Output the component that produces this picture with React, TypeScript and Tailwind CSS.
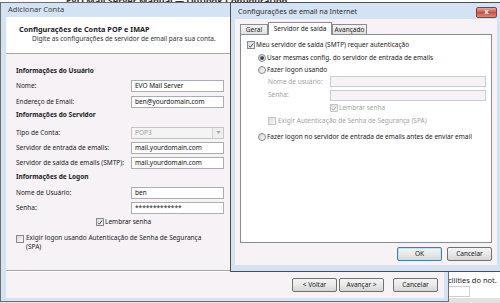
import React from "react";

type CheckProps = { checked?: boolean; disabled?: boolean };

const Check = ({ checked = false, disabled = false }: CheckProps) => (
  <span
    className={`inline-flex h-[8px] w-[8px] shrink-0 items-center justify-center border bg-linear-to-br from-[#d5d9df] to-[#fbfbfb] ${
      disabled ? "border-[#c6c6c6]" : "border-[#8a8a8a]"
    }`}
  >
    {checked && (
      <svg viewBox="0 0 8 8" className="h-[7px] w-[7px]">
        <path
          d="M1.4 4.3 L3.2 6.3 L6.8 1.3"
          fill="none"
          stroke={disabled ? "#a9a9a9" : "#2c3f66"}
          strokeWidth="1.3"
        />
      </svg>
    )}
  </span>
);

const Radio = ({ checked = false }: { checked?: boolean }) => (
  <span className="inline-flex h-[8px] w-[8px] shrink-0 items-center justify-center rounded-full border border-[#8a8a8a] bg-linear-to-br from-[#cfd3d9] to-[#fbfbfb]">
    {checked && <span className="h-[4px] w-[4px] rounded-full bg-linear-to-br from-[#60759a] to-[#18263f]" />}
  </span>
);

const Field = ({ value = "", className = "" }: { value?: string; className?: string }) => (
  <div
    className={`flex h-[12px] items-center whitespace-nowrap border border-[#abadb3] bg-white pl-[3px] text-[6.5px] text-[#111] ${className}`}
  >
    {value}
  </div>
);

const Btn = ({ label, focused = false }: { label: string; focused?: boolean }) => (
  <div
    className={`flex h-[14px] w-[45px] items-center justify-center rounded-[2px] border bg-linear-to-b from-[#f4f4f4] via-[#e9e9e9] to-[#d5d5d5] text-[6.5px] text-[#222] ${
      focused ? "border-[#3c7fb1] shadow-[inset_0_0_0_1px_#bfe3f8]" : "border-[#707070]"
    }`}
  >
    {label}
  </div>
);

const Row = ({ label, children, h }: { label: string; children: React.ReactNode; h: string }) => (
  <div className={`flex items-center ${h}`}>
    <span className="w-[115px] whitespace-nowrap text-[6.5px]">{label}</span>
    {children}
  </div>
);

const LeftDialog = () => (
  <div className="absolute left-0 top-[2px] flex h-[300px] w-[449px] flex-col border border-[#6f6f6f] bg-[#d4e3f3] pb-[3px] pl-[5px] pr-[4px]">
    <div className="flex h-[14px] items-center pl-[2px] text-[7.5px] text-[#3d3d3d]">Adicionar Conta</div>

    <div className="flex flex-1 flex-col bg-[#f6f2f6]">
      {/* Header */}
      <div className="h-[37px] border-b border-[#a7a7a7] bg-white pl-[13px] pt-[7px]">
        <div className="text-[7.3px] font-bold leading-[10px]">Configurações de Conta POP e IMAP</div>
        <div className="pl-[13px] text-[6.5px] leading-[10px] text-[#333]">
          Digite as configurações de servidor de email para sua conta.
        </div>
      </div>

      {/* Body */}
      <div className="flex-1 pl-[10px] pt-[10px]">
        <div className="flex h-[14px] items-center text-[6.5px] font-bold">Informações do Usuário</div>
        <Row label="Nome:" h="h-[16px]">
          <Field value="EVO Mail Server" className="w-[93px]" />
        </Row>
        <Row label="Endereço de Email:" h="h-[15px]">
          <Field value="ben@yourdomain.com" className="w-[93px]" />
        </Row>
        <div className="flex h-[12px] items-center text-[6.5px] font-bold">Informações do Servidor</div>
        <Row label="Tipo de Conta:" h="mt-[4px] h-[15px]">
          <div className="flex h-[12px] w-[93px] items-center border border-[#c5c5c5] bg-[#f4f4f4] pl-[3px] text-[6.5px] text-[#9a9a9a]">
            <span className="flex-1">POP3</span>
            <span className="flex h-[10px] w-[11px] items-center justify-center border-l border-[#d5d5d5] bg-[#eeeeee]">
              <svg viewBox="0 0 6 4" className="h-[3px] w-[5px]">
                <path d="M0 0 L6 0 L3 4 Z" fill="#a8a8a8" />
              </svg>
            </span>
          </div>
        </Row>
        <Row label="Servidor de entrada de emails:" h="h-[15px]">
          <Field value="mail.yourdomain.com" className="w-[93px]" />
        </Row>
        <Row label="Servidor de saída de emails (SMTP):" h="h-[15px]">
          <Field value="mail.yourdomain.com" className="w-[93px]" />
        </Row>
        <div className="flex h-[14px] items-center text-[6.5px] font-bold">Informações de Logon</div>
        <Row label="Nome de Usuário:" h="mt-[1px] h-[16px]">
          <Field value="ben" className="w-[93px]" />
        </Row>
        <Row label="Senha:" h="h-[13px]">
          <Field value="*************" className="w-[93px] text-[5.5px]" />
        </Row>
        <div className="flex h-[16px] items-center gap-[1px] pl-[80px] text-[6.5px]">
          <Check checked />
          <span>Lembrar senha</span>
        </div>
        <div className="mt-[4px] flex items-start gap-[2px] text-[6.5px] leading-[8.5px]">
          <span className="mt-[1px]">
            <Check />
          </span>
          <span>
            Exigir logon usando Autenticação de Senha de Segurança
            <br />
            (SPA)
          </span>
        </div>
      </div>

      {/* Footer */}
      <div className="flex h-[28px] items-center justify-end gap-[2px] border-t border-[#a7a7a7] pr-[6px] shadow-[inset_0_1px_0_#ffffff]">
        <Btn label="< Voltar" />
        <Btn label="Avançar >" />
        <div className="ml-[7px]">
          <Btn label="Cancelar" />
        </div>
      </div>
    </div>
  </div>
);

const Tab = ({ label, w, active = false }: { label: string; w: string; active?: boolean }) =>
  active ? (
    <div className={`relative z-10 -mb-[1px] flex h-[13px] items-center justify-center border border-b-0 border-[#898c95] bg-white text-[6.5px] ${w}`}>
      {label}
    </div>
  ) : (
    <div className={`flex h-[10px] items-center justify-center border border-b-0 border-[#898c95] bg-linear-to-b from-[#f3f3f3] to-[#e2e2e2] text-[6.5px] ${w}`}>
      {label}
    </div>
  );

const RightDialog = () => (
  <div className="absolute left-[230px] top-[2px] flex h-[270px] w-[272px] flex-col border border-[#4d4d4d] bg-[#d4e3f3] pb-[6px] pl-[4px] pr-[4px]">
    <div className="flex h-[16px] items-center justify-between pl-[3px] text-[7.2px] text-[#2b2b2b]">
      <span>Configurações de email na Internet</span>
      <span className="mt-[3px] flex h-[11px] w-[21px] items-center justify-center rounded-[2px] border border-[#8b3b36] bg-linear-to-b from-[#e9a99c] via-[#c8523f] to-[#d88a7c] text-[7px] font-bold text-white">
        x
      </span>
    </div>

    <div className="flex flex-1 flex-col bg-[#f6f2f6] px-[5px] pt-[3px]">
      <div className="flex items-end">
        <Tab label="Geral" w="w-[28px]" />
        <Tab label="Servidor de saída" w="w-[64px]" active />
        <Tab label="Avançado" w="w-[35px]" />
      </div>

      <div className="h-[209px] whitespace-nowrap border border-[#898c95] bg-white pl-[6px] pt-[4px] text-[6.5px]">
        <div className="flex h-[12px] items-center gap-[1px]">
          <Check checked />
          <span>Meu servidor de saída (SMTP) requer autenticação</span>
        </div>
        <div className="flex h-[13px] items-center gap-[1px] pl-[11px]">
          <Radio checked />
          <span>Usar mesmas config. do servidor de entrada de emails</span>
        </div>
        <div className="flex h-[11px] items-center gap-[1px] pl-[11px]">
          <Radio />
          <span>Fazer logon usando</span>
        </div>
        <div className="flex h-[13px] items-center pl-[21px] text-[#a3a3a3]">
          <span className="w-[62px]">Nome de usuário:</span>
          <div className="h-[11px] w-[156px] border border-[#c9ccd3] bg-[#f6f2f6]" />
        </div>
        <div className="flex h-[14px] items-center pl-[21px] text-[#a3a3a3]">
          <span className="w-[62px]">Senha:</span>
          <div className="h-[11px] w-[156px] border border-[#c9ccd3] bg-[#f6f2f6]" />
        </div>
        <div className="flex h-[12px] items-center gap-[1px] pl-[83px] text-[#a3a3a3]">
          <Check checked disabled />
          <span>Lembrar senha</span>
        </div>
        <div className="flex h-[13px] items-center gap-[2px] pl-[21px] text-[#a3a3a3]">
          <Check disabled />
          <span>Exigir Autenticação de Senha de Segurança (SPA)</span>
        </div>
        <div className="mt-[3px] flex h-[14px] items-center gap-[1px] pl-[11px]">
          <Radio />
          <span>Fazer logon no servidor de entrada de emails antes de enviar email</span>
        </div>
      </div>

      <div className="flex flex-1 items-center justify-end gap-[5px]">
        <Btn label="OK" focused />
        <Btn label="Cancelar" />
      </div>
    </div>
  </div>
);

export default function App() {
  return (
    <div className="relative h-[303px] w-[500px] overflow-hidden bg-white font-['Noto_Sans',sans-serif] text-[#1b1b1b]">
      {/* Page behind the dialogs */}
      <div className="absolute left-[66px] top-[-6px] text-[9px] font-bold text-[#333]">
        EVO Mail Server Manual — Outlook Configuration
      </div>
      <div className="absolute left-[448px] top-[275px] whitespace-nowrap text-[7.5px] text-[#222]">cilities do not.</div>
      <div className="absolute left-[448px] top-[286px] h-[11px] w-[22px] border border-[#cfcfcf] bg-white" />
      <div className="absolute bottom-0 left-0 h-[5px] w-full bg-[#e2e2e2]" />

      <LeftDialog />
      <RightDialog />
    </div>
  );
}
